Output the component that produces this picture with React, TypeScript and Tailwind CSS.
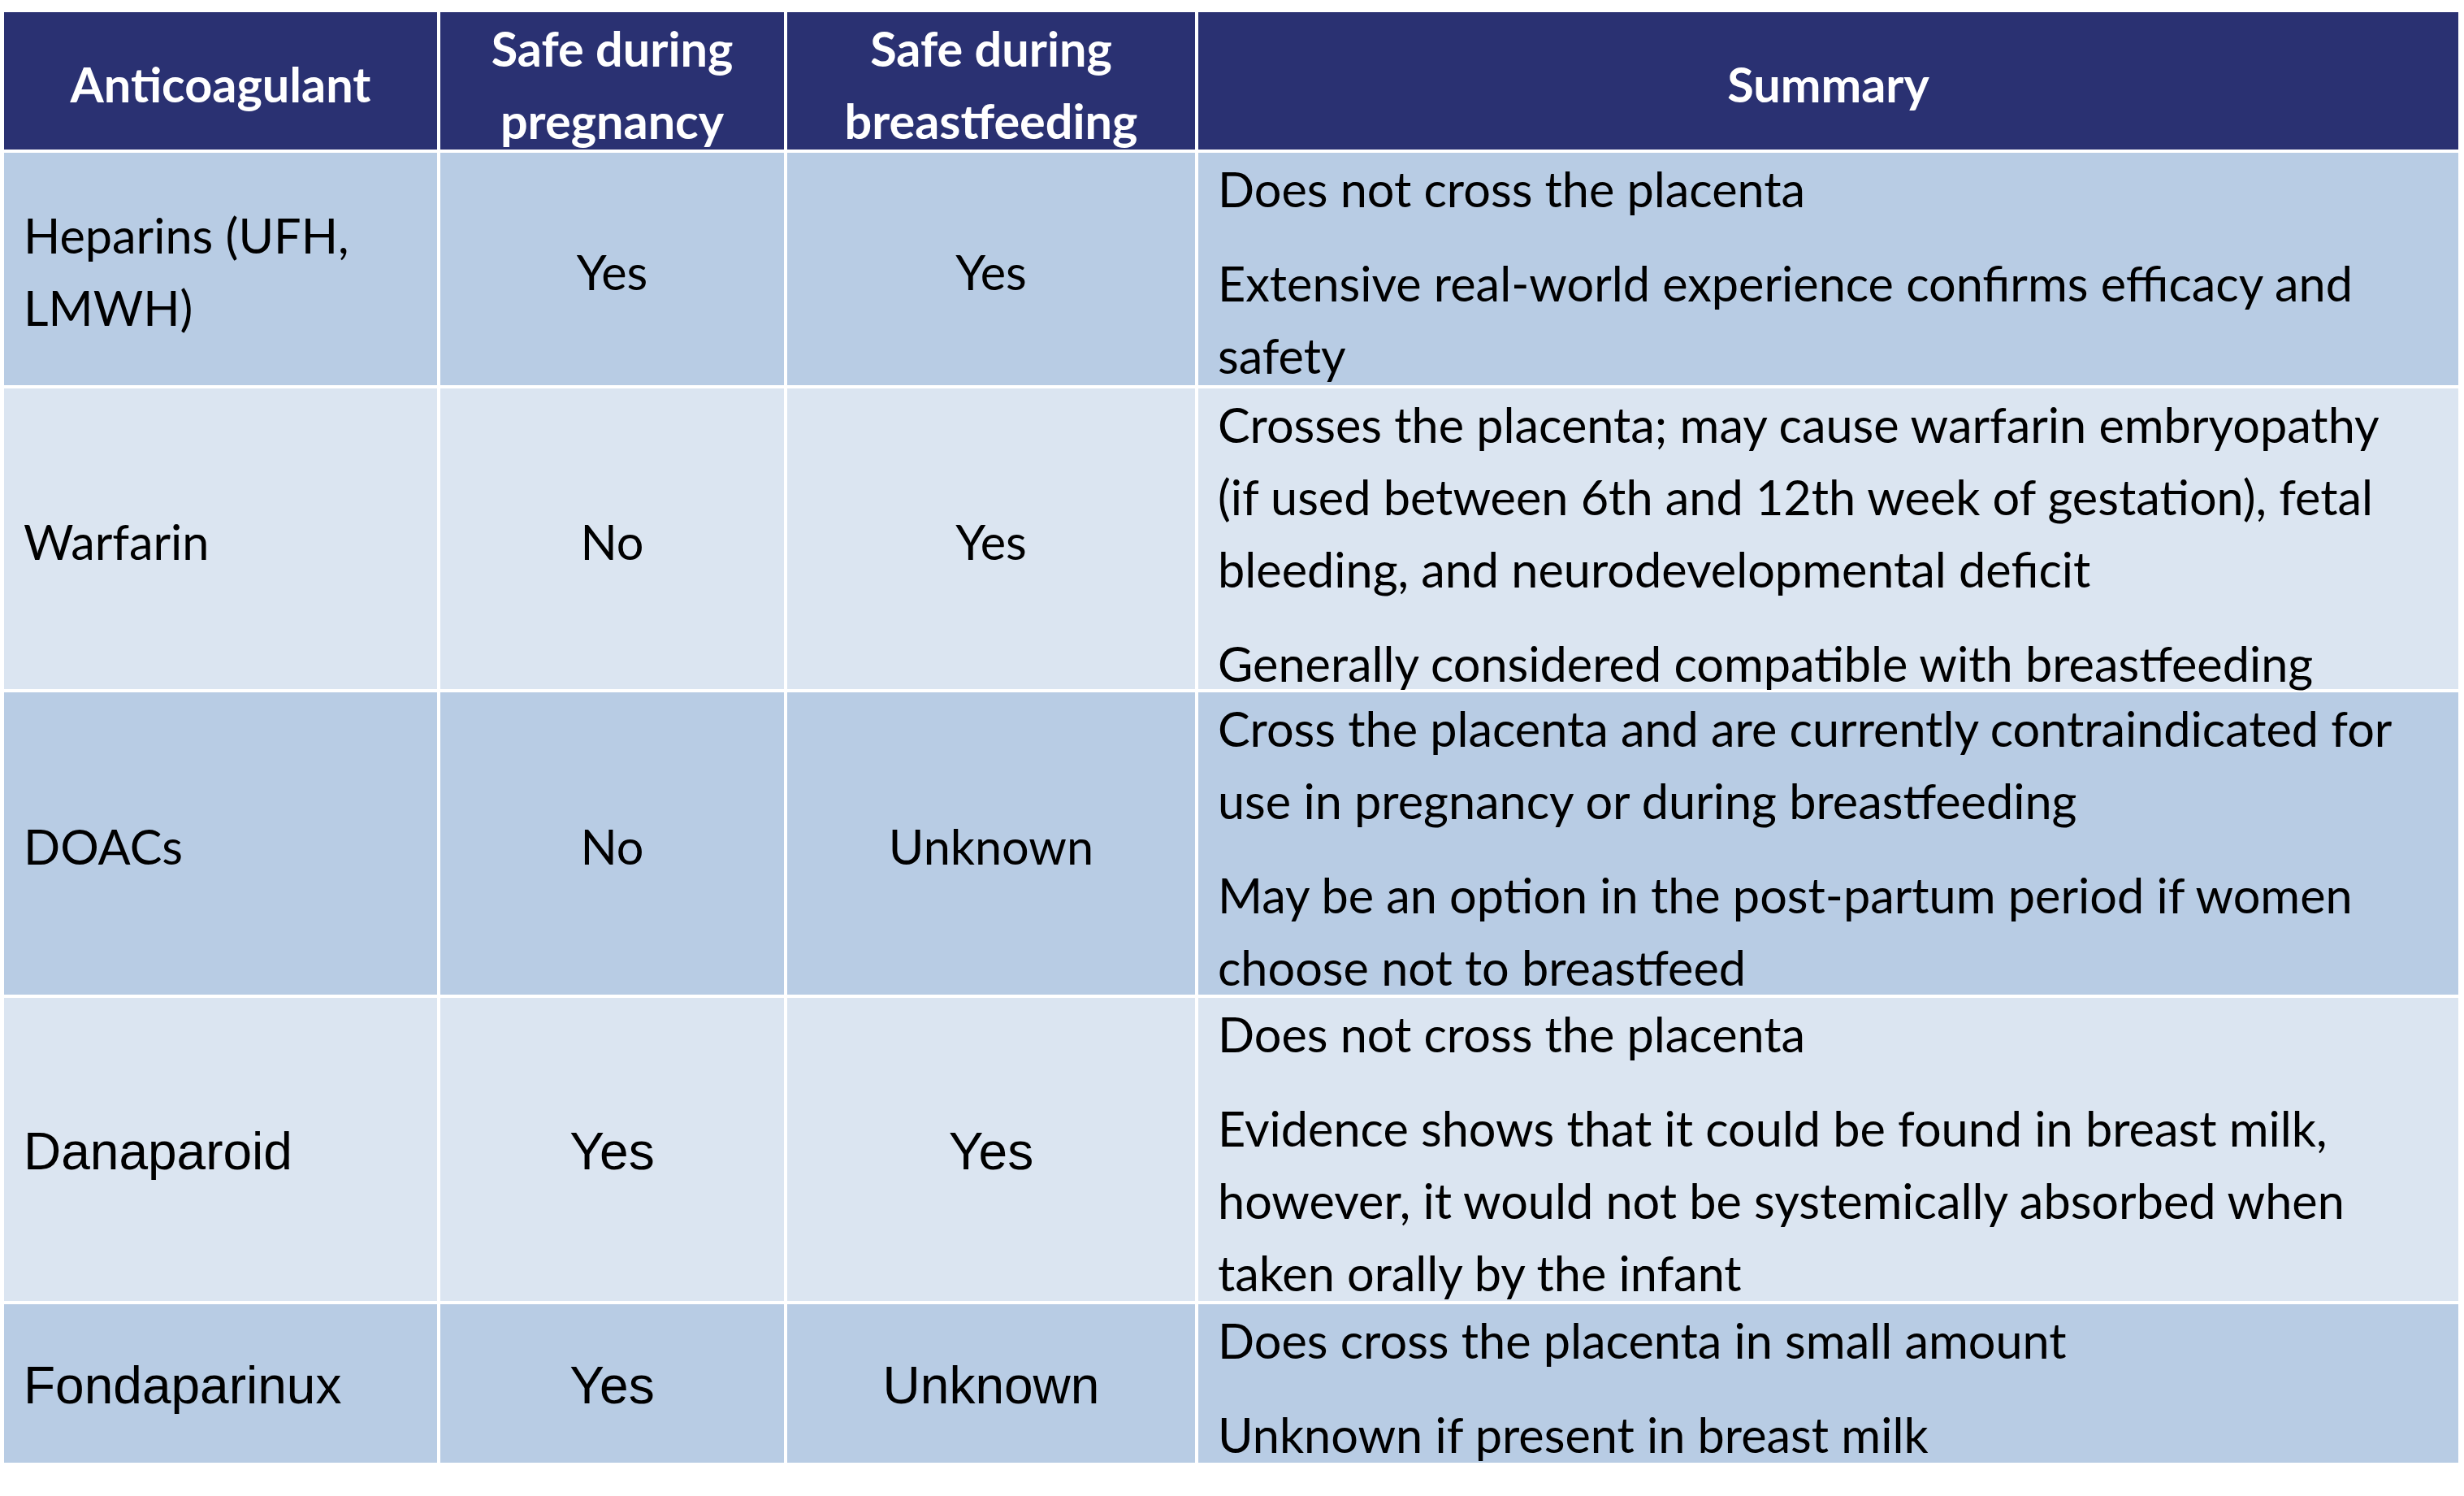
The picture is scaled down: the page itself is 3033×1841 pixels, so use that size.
type Row = {
  name: string[];
  pregnancy: string;
  breastfeeding: string;
  summary: string[][];
  dark: boolean;
  arial: boolean;
  height: string;
};

const rows: Row[] = [
  {
    name: ["Heparins (UFH,", "LMWH)"],
    pregnancy: "Yes",
    breastfeeding: "Yes",
    summary: [
      ["Does not cross the placenta"],
      ["Extensive real-world experience confirms efficacy and", "safety"],
    ],
    dark: true,
    arial: false,
    height: "h-[286px]",
  },
  {
    name: ["Warfarin"],
    pregnancy: "No",
    breastfeeding: "Yes",
    summary: [
      [
        "Crosses the placenta; may cause warfarin embryopathy",
        "(if used between 6th and 12th week of gestation), fetal",
        "bleeding, and neurodevelopmental deficit",
      ],
      ["Generally considered compatible with breastfeeding"],
    ],
    dark: false,
    arial: false,
    height: "h-[370px]",
  },
  {
    name: ["DOACs"],
    pregnancy: "No",
    breastfeeding: "Unknown",
    summary: [
      [
        "Cross the placenta and are currently contraindicated for",
        "use in pregnancy or during breastfeeding",
      ],
      [
        "May be an option in the post-partum period if women",
        "choose not to breastfeed",
      ],
    ],
    dark: true,
    arial: false,
    height: "h-[372px]",
  },
  {
    name: ["Danaparoid"],
    pregnancy: "Yes",
    breastfeeding: "Yes",
    summary: [
      ["Does not cross the placenta"],
      [
        "Evidence shows that it could be found in breast milk,",
        "however, it would not be systemically absorbed when",
        "taken orally by the infant",
      ],
    ],
    dark: false,
    arial: true,
    height: "h-[373px]",
  },
  {
    name: ["Fondaparinux"],
    pregnancy: "Yes",
    breastfeeding: "Unknown",
    summary: [
      ["Does cross the placenta in small amount"],
      ["Unknown if present in breast milk"],
    ],
    dark: true,
    arial: true,
    height: "h-[195px]",
  },
];

function Lines({ lines }: { lines: string[] }) {
  return (
    <>
      {lines.map((line, i) => (
        <span key={i} className="block whitespace-nowrap">
          {line}
        </span>
      ))}
    </>
  );
}

export default function App() {
  return (
    <div className="min-h-screen bg-white pt-[15px] pl-[5px] font-['Lato',sans-serif] text-[59.4px] leading-[89px] text-black">
      <div className="flex w-[3021px] flex-col gap-[4px]">
        {/* header */}
        <div className="flex h-[169px] gap-[4px] font-bold text-white">
          <div className="flex w-[533px] items-center justify-center bg-[#2a3172] pt-[8px]">
            Anticoagulant
          </div>
          <div className="flex w-[423px] items-center justify-center bg-[#2a3172] pt-[8px] text-center">
            <div>
              <Lines lines={["Safe during", "pregnancy"]} />
            </div>
          </div>
          <div className="flex w-[502px] items-center justify-center bg-[#2a3172] pt-[8px] text-center">
            <div>
              <Lines lines={["Safe during", "breastfeeding"]} />
            </div>
          </div>
          <div className="flex flex-1 items-center justify-center bg-[#2a3172] pt-[8px]">
            Summary
          </div>
        </div>

        {rows.map((row) => {
          const bg = row.dark ? "bg-[#b8cce4]" : "bg-[#dbe5f1]";
          const side = row.arial
            ? "font-['Liberation_Sans',Arial,sans-serif] text-[64px]"
            : "";
          return (
            <div key={row.name.join(" ")} className={`flex gap-[4px] ${row.height}`}>
              <div className={`flex w-[533px] items-center pl-[24px] pt-[6px] ${bg} ${side}`}>
                <div>
                  <Lines lines={row.name} />
                </div>
              </div>
              <div className={`flex w-[423px] items-center justify-center pt-[6px] ${bg} ${side}`}>
                {row.pregnancy}
              </div>
              <div className={`flex w-[502px] items-center justify-center pt-[6px] ${bg} ${side}`}>
                {row.breastfeeding}
              </div>
              <div className={`flex-1 pl-[24px] ${bg}`}>
                {row.summary.map((para, i) => (
                  <div key={i} className={i > 0 ? "mt-[27px]" : ""}>
                    <Lines lines={para} />
                  </div>
                ))}
              </div>
            </div>
          );
        })}
      </div>
    </div>
  );
}
